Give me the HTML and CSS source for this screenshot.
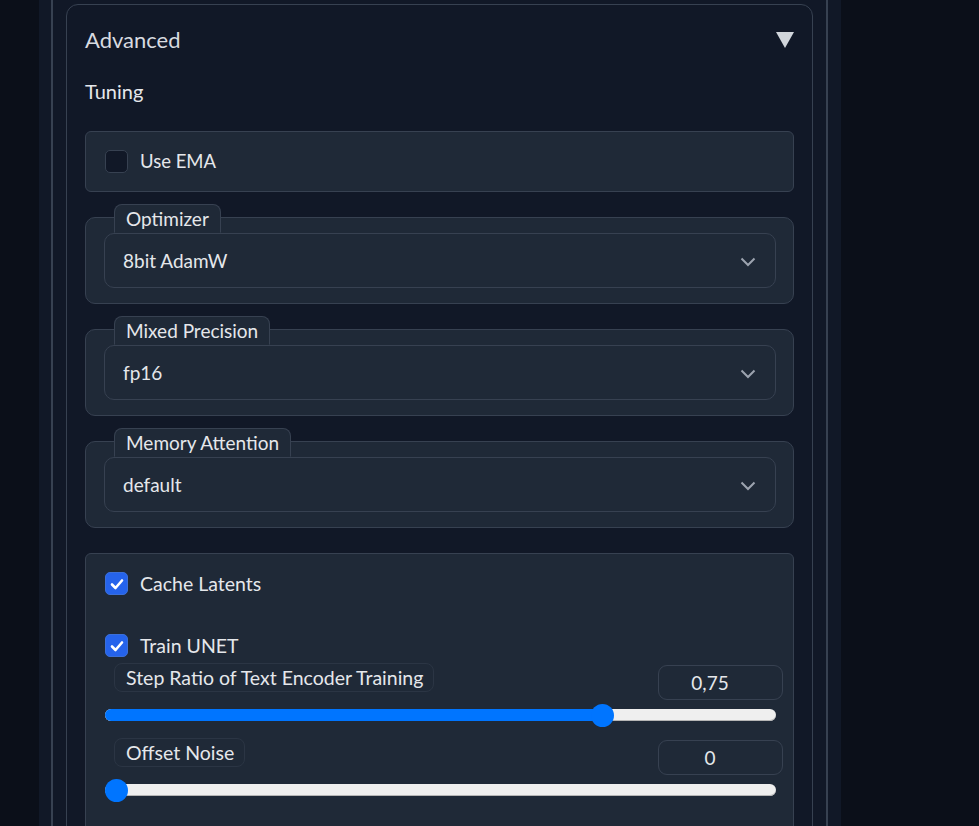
FILE: index.html
```html
<!DOCTYPE html>
<html>
<head>
<meta charset="utf-8">
<link rel="stylesheet" href="styles.css">
</head>
<body>
<div class="page">
  <div class="column">
    <section class="accordion">
      <div class="acc-head">
        <span class="acc-title">Advanced</span>
        <svg class="tri" width="18" height="16" viewBox="0 0 18 16"><polygon points="0,0 18,0 9,16" fill="#d1d5db"/></svg>
      </div>
      <div class="section-title">Tuning</div>

      <div class="block check-block">
        <label class="check"><span class="box"></span><span class="check-label">Use EMA</span></label>
      </div>

      <div class="group">
        <span class="badge">Optimizer</span>
        <div class="select"><span>8bit AdamW</span><svg class="chev" width="16" height="10" viewBox="0 0 16 10"><path d="M1.5 1.5 L8 8 L14.5 1.5" fill="none" stroke="#9ca3af" stroke-width="2"/></svg></div>
      </div>

      <div class="group">
        <span class="badge">Mixed Precision</span>
        <div class="select"><span>fp16</span><svg class="chev" width="16" height="10" viewBox="0 0 16 10"><path d="M1.5 1.5 L8 8 L14.5 1.5" fill="none" stroke="#9ca3af" stroke-width="2"/></svg></div>
      </div>

      <div class="group">
        <span class="badge">Memory Attention</span>
        <div class="select"><span>default</span><svg class="chev" width="16" height="10" viewBox="0 0 16 10"><path d="M1.5 1.5 L8 8 L14.5 1.5" fill="none" stroke="#9ca3af" stroke-width="2"/></svg></div>
      </div>

      <div class="block cache-block">
        <label class="check"><span class="box on"><svg width="14" height="12" viewBox="0 0 14 12"><path d="M2 6.5 L5.5 10 L12 2.5" fill="none" stroke="#fff" stroke-width="2.6" stroke-linecap="round" stroke-linejoin="round"/></svg></span><span class="check-label wide">Cache Latents</span></label>
        <label class="check second"><span class="box on"><svg width="14" height="12" viewBox="0 0 14 12"><path d="M2 6.5 L5.5 10 L12 2.5" fill="none" stroke="#fff" stroke-width="2.6" stroke-linecap="round" stroke-linejoin="round"/></svg></span><span class="check-label wide">Train UNET</span></label>

        <div class="slider-field">
          <div class="slider-head">
            <span class="flat-badge">Step Ratio of Text Encoder Training</span>
            <div class="num">0,75</div>
          </div>
          <div class="range">
            <div class="fill" style="width: 497px"></div>
            <div class="thumb" style="left: 486px"></div>
          </div>
        </div>

        <div class="slider-field next">
          <div class="slider-head">
            <span class="flat-badge">Offset Noise</span>
            <div class="num">0</div>
          </div>
          <div class="range">
            <div class="fill" style="width: 0px"></div>
            <div class="thumb" style="left: 0px"></div>
          </div>
        </div>
      </div>
    </section>
  </div>
</div>
</body>
</html>
```

FILE: styles.css
```css
* { box-sizing: border-box; }

html, body {
  margin: 0;
  height: 826px;
  overflow: hidden;
  background: #0b0f19;
  font-family: Lato, "Liberation Sans", sans-serif;
  color: #e5e7eb;
}

.page {
  margin-left: 39px;
  width: 802px;
  height: 826px;
  background: #111827;
  padding: 0 13px 0 12px;
}

.column {
  height: 100%;
  border-left: 2px solid #374151;
  border-right: 2px solid #374151;
  padding: 4px 13px 0 13px;
}

.accordion {
  border: 1px solid #374151;
  border-radius: 12px;
  background: #111827;
  padding: 21px 18px 40px 18px;
  min-height: 900px;
}

.acc-head {
  display: flex;
  align-items: center;
  justify-content: space-between;
  height: 28px;
}

.acc-title {
  font-size: 22px;
  line-height: 28px;
  color: #d8dbe0;
}

.tri { display: block; }

.section-title {
  margin-top: 25px;
  font-size: 20px;
  line-height: 24px;
  color: #e5e7eb;
}

.block {
  background: #1f2937;
  border: 1px solid #374151;
  border-radius: 6px;
}

.check-block {
  margin-top: 28px;
  padding: 18px 19px;
}

.check {
  display: flex;
  align-items: center;
  height: 23px;
  gap: 12px;
}

.box {
  width: 23px;
  height: 23px;
  border-radius: 5px;
  border: 1px solid #374151;
  background: #111827;
  display: flex;
  align-items: center;
  justify-content: center;
  flex: none;
}

.box.on {
  background: #2563eb;
  border-color: #3b6fd8;
}

.check-label {
  font-size: 18.5px;
  line-height: 23px;
}

.check-label.wide {
  font-size: 19.5px;
}

.group {
  position: relative;
  margin-top: 25px;
  background: #1f2937;
  border: 1px solid #374151;
  border-radius: 10px;
  padding: 15px 17px 15px 18px;
}

.badge {
  position: absolute;
  left: 28px;
  top: -14px;
  height: 29px;
  padding: 0 11px;
  font-size: 19px;
  line-height: 27px;
  background: #1f2937;
  border: 1px solid #374151;
  border-bottom-color: transparent;
  border-radius: 8px 8px 0 0;
}

.select {
  display: flex;
  align-items: center;
  justify-content: space-between;
  height: 55px;
  border: 1px solid #374151;
  border-radius: 10px;
  background: #1f2937;
  padding: 0 19px 0 18px;
  font-size: 19px;
}

.chev { display: block; margin-top: 2px; }

.cache-block {
  margin-top: 25px;
  padding: 18px 17px 40px 19px;
  min-height: 300px;
}

.check.second { margin-top: 39px; }

.slider-field { margin-top: 6px; }
.slider-field.next { margin-top: 17px; }

.slider-head {
  display: flex;
  justify-content: space-between;
  align-items: flex-start;
  padding-left: 9px;
  margin-right: -7px;
  height: 37px;
}

.flat-badge {
  height: 29px;
  padding: 0 10px 0 11px;
  font-size: 19.5px;
  line-height: 27px;
  border: 1px solid #2b3544;
  border-radius: 8px;
}

.num {
  margin-top: 2px;
  width: 125px;
  height: 35px;
  border: 1px solid #374151;
  border-radius: 9px;
  padding-right: 21px;
  text-align: center;
  font-size: 19px;
  line-height: 33px;
}

.range {
  position: relative;
  margin-top: 9px;
  height: 12px;
  border-radius: 6px;
  background: #efefef;
  box-shadow: inset 0 -1px 0 #b5b5b5;
}

.fill {
  position: absolute;
  left: 0;
  top: 0;
  height: 12px;
  border-radius: 6px 0 0 6px;
  background: #0075ff;
}

.thumb {
  position: absolute;
  top: -5.5px;
  width: 23px;
  height: 23px;
  border-radius: 50%;
  background: #0075ff;
}
```
